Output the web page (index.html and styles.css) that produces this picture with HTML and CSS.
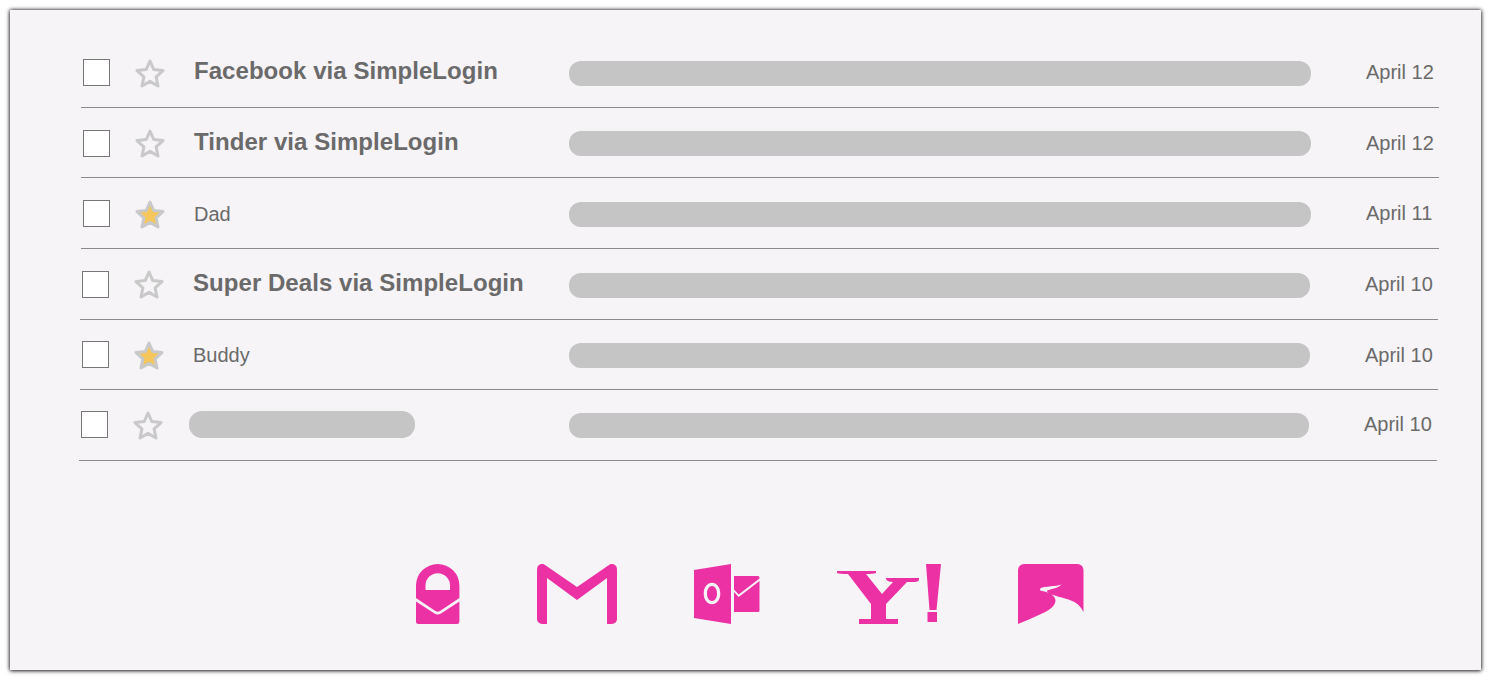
FILE: index.html
```html
<!DOCTYPE html>
<html lang="en">
<head>
    <meta charset="UTF-8">
    <title>Inbox</title>
    <link rel="stylesheet" href="styles.css">
</head>
<body>
    <div class="card">
        <svg class="defs" width="0" height="0">
            <defs>
                <polygon id="star" points="15,2 18.8,10.6 28,11.6 21.1,17.9 23,27 15,22.4 7,27 8.9,17.9 2,11.6 11.2,10.6"/>
            </defs>
        </svg>

        <div class="mail-list">
            <div class="row">
                <span class="check"></span>
                <svg class="star" viewBox="0 0 30 29"><use href="#star"/></svg>
                <span class="name name-bold">Facebook via SimpleLogin</span>
                <span class="bar"></span>
                <span class="date">April 12</span>
            </div>
            <div class="row">
                <span class="check"></span>
                <svg class="star" viewBox="0 0 30 29"><use href="#star"/></svg>
                <span class="name name-bold">Tinder via SimpleLogin</span>
                <span class="bar"></span>
                <span class="date">April 12</span>
            </div>
            <div class="row">
                <span class="check"></span>
                <svg class="star star-on" viewBox="0 0 30 29"><use href="#star"/></svg>
                <span class="name">Dad</span>
                <span class="bar"></span>
                <span class="date">April 11</span>
            </div>
            <div class="row row-shift">
                <span class="check"></span>
                <svg class="star" viewBox="0 0 30 29"><use href="#star"/></svg>
                <span class="name name-bold">Super Deals via SimpleLogin</span>
                <span class="bar"></span>
                <span class="date">April 10</span>
            </div>
            <div class="row row-shift">
                <span class="check"></span>
                <svg class="star star-on" viewBox="0 0 30 29"><use href="#star"/></svg>
                <span class="name">Buddy</span>
                <span class="bar"></span>
                <span class="date">April 10</span>
            </div>
            <div class="row row-last">
                <span class="check"></span>
                <svg class="star" viewBox="0 0 30 29"><use href="#star"/></svg>
                <span class="name"><span class="name-pill"></span></span>
                <span class="bar"></span>
                <span class="date">April 10</span>
            </div>
        </div>

        <div class="providers">
            <!-- ProtonMail -->
            <svg class="logo" width="44" height="60" viewBox="0 0 44 60">
                <path fill-rule="evenodd" d="M0 21.5A21.7 21.5 0 0 1 43.4 21.5V34L24 47Q21.7 48.3 19.4 47L0 34ZM9.5 26V21.5A12.2 12.2 0 0 1 34 21.5V26Z"/>
                <path d="M0 37.5L18.5 49.5Q21.7 51.3 25 49.5L43.4 37.5V57.5Q43.4 60 41 60H2.5Q0 60 0 57.5Z"/>
            </svg>
            <!-- Gmail -->
            <svg class="logo" width="80" height="60" viewBox="0 0 80 60">
                <path d="M0 5A5 5 0 0 1 8 1L40 23L72 1A5 5 0 0 1 80 5V55A5 5 0 0 1 75 60H70V14L40 36L10 14V60H5A5 5 0 0 1 0 55Z"/>
            </svg>
            <!-- Outlook -->
            <svg class="logo" width="66" height="60" viewBox="0 0 66 60">
                <path fill-rule="evenodd" d="M0 6L37 0V60L0 54ZM18 18.7C13.5 18.7 9.7 23 9.7 29.5C9.7 36 13.5 40.3 18 40.3C22.5 40.3 26.3 36 26.3 29.5C26.3 23 22.5 18.7 18 18.7ZM18 22C21 22 23 25.2 23 29.5C23 33.8 21 37 18 37C15 37 13 33.8 13 29.5C13 25.2 15 22 18 22Z"/>
                <path d="M40 12H64A1.5 1.5 0 0 1 65.5 13.5V14.5L44.7 30.5L40 25.5ZM40 28L44.7 33L65.5 17V46.5A1.5 1.5 0 0 1 64 48H40Z"/>
            </svg>
            <!-- Yahoo -->
            <svg class="logo" width="104" height="60" viewBox="0 0 104 60">
                <path d="M0 7H39V9Q36 10 29 10L45 30L56 18Q50 18 49 15V14H82V16Q81 18 76 18H70L49 40V55H61V60H22V55H34V40L11 10Q2 10 0 9Z"/>
                <path d="M89 0H104L99.5 46H92.5ZM90.5 48H100V58H90.5Z"/>
            </svg>
            <!-- SimpleLogin -->
            <svg class="logo" width="66" height="60" viewBox="0 0 66 60">
                <path d="M0 6A6 6 0 0 1 6 0H59.5A6 6 0 0 1 65.5 6V48C62 41 57 37 47 34.5C38 32 30 30 28.7 27C31 25 41 24.5 43.7 20C42 22.3 31 22 24 23.5C21 24.5 21.5 26.5 24 27C31 28 38 32 37.5 37C37 42 32 46 24 49.5C16 53 8 57 0 60Z"/>
            </svg>
        </div>
    </div>
</body>
</html>
```

FILE: styles.css
```css
* {
    box-sizing: border-box;
}

html,
body {
    margin: 0;
    height: 100%;
    overflow: hidden;
}

body {
    background: #fff;
    padding: 10px 11px 12px 10px;
    font-family: "Liberation Sans", Arial, sans-serif;
    color: #6a6a6a;
}

.defs {
    display: block;
}

/* Card */
.card {
    height: 660px;
    padding: 27.3px 0 0 71px;
    background: #f6f4f7;
    box-shadow: 0 0 4px rgba(0, 0, 0, 0.9), 0 1px 4px rgba(0, 0, 0, 0.5);
}

/* Mail rows */
.mail-list {
    width: 1358px;
}

.row {
    display: flex;
    align-items: center;
    height: 70.6px;
    padding: 2px 6px 0 2px;
    border-bottom: 1px solid #8a8a8a;
}

.row-shift {
    margin: 0 1px 0 -1px;
}

.row-last {
    margin: 0 2px 0 -2px;
    padding-top: 0;
}

.check {
    flex: none;
    width: 27px;
    height: 27px;
    margin-top: -1px;
    background: #fff;
    border: 1px solid #777;
}

.star {
    flex: none;
    width: 30px;
    height: 29px;
    margin: 0 29px 0 25px;
}

.star use {
    fill: none;
    stroke: #c9c9c9;
    stroke-width: 3;
    stroke-linejoin: round;
}

.star-on use {
    fill: #f4c65c;
}

.name {
    flex: none;
    width: 375px;
    font-size: 20px;
}

.row-shift .name {
    width: 376px;
}

.row-last .name {
    width: 377px;
}

.name-bold {
    margin-top: -3.6px;
    font-size: 24px;
    font-weight: bold;
    letter-spacing: 0.05px;
}

.name-pill {
    display: block;
    width: 226px;
    height: 27px;
    margin: -1px 0 0 -3px;
    background: #c5c5c5;
    border-radius: 13px;
}

.bar {
    flex: 1;
    height: 25px;
    margin-top: 0.5px;
    background: #c5c5c5;
    border-radius: 12px;
}

.date {
    flex: none;
    width: 67px;
    margin: -0.6px 0 0 55px;
    font-size: 20px;
    white-space: nowrap;
}

/* Provider logos */
.providers {
    display: flex;
    gap: 77px;
    margin: 103px 0 0 335px;
}

.logo {
    flex: none;
    fill: #ec31a5;
}
```
